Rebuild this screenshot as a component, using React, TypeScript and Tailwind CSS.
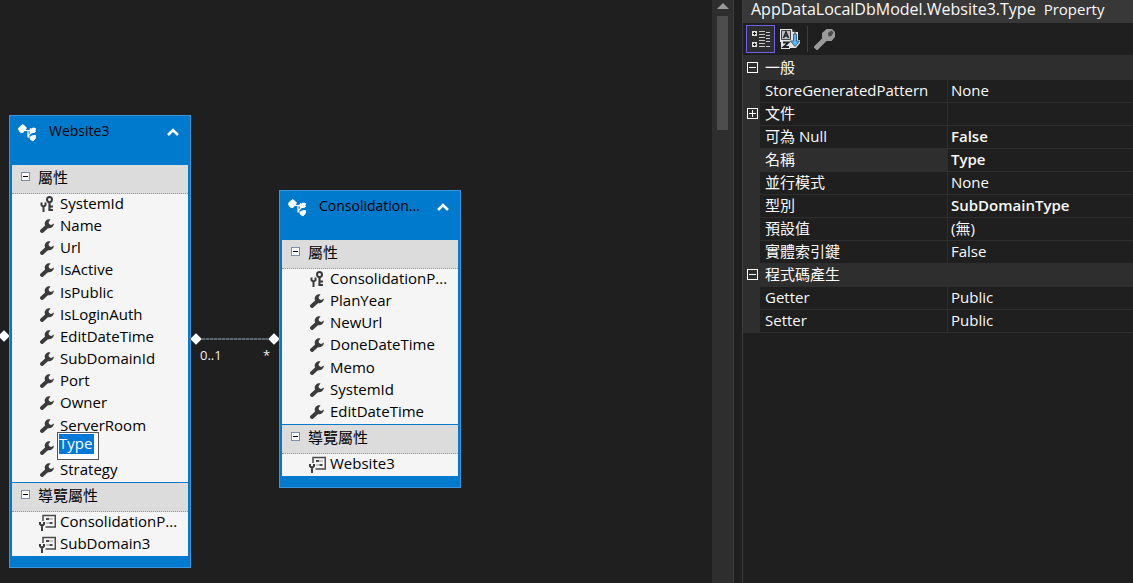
import { ReactNode } from 'react';

type FieldKind = 'key' | 'scalar' | 'navigation';

type Field = {
  name: string;
  kind: FieldKind;
  editing?: boolean;
};

type Property = {
  name: string;
  value: string;
  modified?: boolean;
  selected?: boolean;
  expandable?: boolean;
};

const scalars = (...names: string[]): Field[] =>
  names.map((name) => ({ name, kind: 'scalar' }));

const websiteFields: Field[] = [
  { name: 'SystemId', kind: 'key' },
  ...scalars(
    'Name',
    'Url',
    'IsActive',
    'IsPublic',
    'IsLoginAuth',
    'EditDateTime',
    'SubDomainId',
    'Port',
    'Owner',
    'ServerRoom',
  ),
  { name: 'Type', kind: 'scalar', editing: true },
  ...scalars('Strategy'),
];

const planFields: Field[] = [
  { name: 'ConsolidationP...', kind: 'key' },
  ...scalars(
    'PlanYear',
    'NewUrl',
    'DoneDateTime',
    'Memo',
    'SystemId',
    'EditDateTime',
  ),
];

const generalProperties: Property[] = [
  { name: 'StoreGeneratedPattern', value: 'None' },
  { name: '文件', value: '', expandable: true },
  { name: '可為 Null', value: 'False', modified: true },
  { name: '名稱', value: 'Type', modified: true, selected: true },
  { name: '並行模式', value: 'None' },
  { name: '型別', value: 'SubDomainType', modified: true },
  { name: '預設值', value: '(無)' },
  { name: '實體索引鍵', value: 'False' },
];

const codeProperties: Property[] = [
  { name: 'Getter', value: 'Public' },
  { name: 'Setter', value: 'Public' },
];

const EntityIcon = () => (
  <svg viewBox="0 0 20 20" className="size-5 shrink-0" aria-hidden="true">
    <g fill="#fff" stroke="#fff" strokeLinejoin="round">
      <path d="m1.500 7 1-2L6 2.500 9.500 6 6 10.500 3 10Z" />
      <path d="m13 7 1-.5.5.5 1.500-1 2.500.5-.5 2 .5 1-1.500 1H13Z" />
      <path d="m14.500 14 4-.5-.3 3-2.200 2.500-3-2Z" />
    </g>
    <path d="M8 8.500h5M11 8.500V15h3M11 14l5-5" fill="none" stroke="#fff" strokeWidth="1.200" />
  </svg>
);

const KeyIcon = () => (
  <svg viewBox="0 0 14 16" className="h-4 w-3.5" aria-hidden="true">
    <g fill="none" stroke="#3b3b3b">
      <circle cx="9.500" cy="3.500" r="2.500" strokeWidth="2" />
      <path d="M9.500 6v9M9.500 10.500h3.500M9.500 14h3.500" strokeWidth="2.200" />
      <path d="M1.500 6.500v2.500L3.500 11l2-2V6.500M3.500 10.500V16" strokeWidth="2" />
    </g>
  </svg>
);

const WrenchIcon = () => (
  <svg viewBox="0 0 14 14" className="size-3.5" aria-hidden="true">
    <path d="M2 12 8 6.500" stroke="#3b3b3b" strokeWidth="3.800" strokeLinecap="round" />
    <path
      d="M10.500 .4C7.500-.4 4.500 2 4.700 5l.6 2.400L8 9.200c2.800.6 5.700-1.200 6-4.700L11.200 6 9 5.200 8.600 3Z"
      fill="#3b3b3b"
    />
  </svg>
);

const NavigationIcon = () => (
  <svg viewBox="0 0 18 17" className="h-[17px] w-[18px]" aria-hidden="true">
    <g fill="none" stroke="#4a4a4a">
      <path d="M5 7V1.500h12.300v11.500H7.500" strokeWidth="1.500" />
      <path d="M8 5h3M11.500 9h3" strokeWidth="1.800" />
      <path d="M11 5h4M8 9h3.500" stroke="#999" />
      <path d="M2 8v2l2 2 2-2V8M4 12v5" stroke="#3b3b3b" strokeWidth="2" />
    </g>
  </svg>
);

const FieldIcon = ({ kind }: { kind: FieldKind }) => {
  if (kind === 'key') return <KeyIcon />;
  if (kind === 'navigation') return <NavigationIcon />;
  return <WrenchIcon />;
};

const FieldRow = ({ field }: { field: Field }) => (
  <li className="relative flex h-[22px] items-start">
    <span
      className={`flex h-5 w-[46px] shrink-0 items-center justify-end ${
        field.kind === 'navigation' ? 'pr-0.5' : 'pr-1'
      }`}
    >
      <FieldIcon kind={field.kind} />
    </span>
    {field.editing ? (
      <span className="absolute -top-1.5 left-[45px] z-10 flex h-7 w-[42px] border border-[#555] bg-white p-px">
        <input
          aria-label="Property name"
          defaultValue={field.name}
          className="h-5 w-[35px] bg-[#0078d7] text-[15px] text-white outline-none"
        />
      </span>
    ) : (
      <span className="pl-0.5 leading-[18px] whitespace-nowrap">{field.name}</span>
    )}
  </li>
);

const SectionHeader = ({ title }: { title: string }) => (
  <div className="flex h-[29px] items-center border-b border-dotted border-[#999] bg-[#dcdcdc] pb-1 pl-[9px]">
    <button
      type="button"
      aria-label={`Collapse ${title}`}
      className="mb-0.5 flex size-[9px] items-center justify-center border border-[#7d8fa6] bg-white"
    >
      <span className="h-px w-[5px] bg-black" />
    </button>
    <h3 className="ml-2 text-[15px] font-normal">{title}</h3>
  </div>
);

type EntityProps = {
  title: string;
  className: string;
  fields: Field[];
  navigation: Field[];
};

const Entity = ({ title, className, fields, navigation }: EntityProps) => (
  <section
    className={`absolute flex w-[182px] flex-col border border-[#3b95d8] bg-[#007acc] px-0.5 pb-[11px] text-[15px] text-black ${className}`}
  >
    <header className="flex h-[49px] items-start pt-1.5 pr-[9px] pl-[5px]">
      <EntityIcon />
      <h2 className="ml-3 flex-1 text-sm leading-[18px] whitespace-nowrap">{title}</h2>
      <button type="button" aria-label={`Collapse ${title}`} className="mt-1.5">
        <svg viewBox="0 0 12 8" className="h-2 w-3">
          <path d="m1 7 5-5 5 5" fill="none" stroke="#fff" strokeWidth="2.500" />
        </svg>
      </button>
    </header>
    <SectionHeader title="屬性" />
    <ul className="flex flex-1 flex-col justify-between bg-[#f5f5f5]">
      {fields.map((field) => (
        <FieldRow key={field.name} field={field} />
      ))}
    </ul>
    <div className="border-t border-[#007acc]">
      <SectionHeader title="導覽屬性" />
    </div>
    <ul className="bg-[#f5f5f5]">
      {navigation.map((field) => (
        <FieldRow key={field.name} field={field} />
      ))}
    </ul>
  </section>
);

const Diamond = ({ x, y }: { x: number; y: number }) => (
  <path
    d={`M${x - 6} ${y}l6-6 6 6-6 6Z`}
    fill="#fff"
    stroke="#5a6673"
    strokeWidth="1"
  />
);

const Designer = () => (
  <main className="relative min-w-0 flex-1 overflow-hidden">
    <Entity
      title="Website3"
      className="top-[115px] left-[9px] min-h-[453px]"
      fields={websiteFields}
      navigation={[
        { name: 'ConsolidationP...', kind: 'navigation' },
        { name: 'SubDomain3', kind: 'navigation' },
      ]}
    />
    <Entity
      title="Consolidation..."
      className="top-[190px] left-[279px] min-h-[298px]"
      fields={planFields}
      navigation={[{ name: 'Website3', kind: 'navigation' }]}
    />
    <svg
      viewBox="0 0 290 20"
      className="absolute top-[329px] left-0 h-5 w-[290px]"
      aria-hidden="true"
    >
      <path d="M202 10h66" stroke="#3a4654" strokeWidth="2" />
      <path d="M202 10h66" stroke="#7a838d" strokeDasharray="3 1" />
      <Diamond x={4} y={7} />
      <Diamond x={196} y={10} />
      <Diamond x={274} y={10} />
    </svg>
    <span className="absolute top-[346px] left-[200px] text-[13px] leading-[18px] text-[#f0f0f0]">
      0..1
    </span>
    <span className="absolute top-[346px] left-[263px] text-[13px] leading-[18px] text-[#f0f0f0]">
      *
    </span>
  </main>
);

const Scrollbar = () => (
  <div className="flex w-[22px] shrink-0 flex-col border-r border-[#3d3d3d] bg-[#2e2e2e] px-[5px] pt-[3px]">
    <button type="button" aria-label="Scroll up" className="mb-[7px] w-3">
      <svg viewBox="0 0 12 6" className="h-1.5 w-3">
        <path d="M0 6 6 0l6 6Z" fill="#999" />
      </svg>
    </button>
    <div className="h-[114px] w-[11px] bg-[#4d4d4d]" />
  </div>
);

const ToggleButton = ({ label, expanded }: { label: string; expanded: boolean }) => (
  <button
    type="button"
    aria-label={label}
    aria-expanded={expanded}
    className="ml-1 block size-[11px] border border-white"
  >
    <svg viewBox="0 0 9 9" className="size-[9px]">
      <path
        d={expanded ? 'M1 4.500h7' : 'M1 4.500h7M4.500 1v7'}
        stroke="#fff"
        strokeWidth="1"
      />
    </svg>
  </button>
);

const CategoryRow = ({ title }: { title: string }) => (
  <tr className="h-[23px] bg-[#2e2e2e]">
    <td className="p-0 pb-0.5">
      <ToggleButton label={title} expanded />
    </td>
    <th
      colSpan={2}
      scope="rowgroup"
      className="p-0 pb-[3px] pl-[5px] text-left leading-5 font-normal"
    >
      {title}
    </th>
  </tr>
);

const PropertyRow = ({ property }: { property: Property }) => (
  <tr className="h-[23px]">
    <td className="bg-[#2e2e2e] p-0 pb-0.5">
      {property.expandable && <ToggleButton label={property.name} expanded={false} />}
    </td>
    <th
      scope="row"
      className={`border-r border-b border-[#2e2e2e] p-0 pb-0.5 pl-[5px] text-left font-normal ${
        property.selected ? 'bg-[#2e2e2e]' : ''
      }`}
    >
      {property.name}
    </th>
    <td
      className={`border-b border-[#2e2e2e] p-0 pb-0.5 pl-[3px] ${
        property.modified ? 'font-semibold' : ''
      }`}
    >
      {property.value}
    </td>
  </tr>
);

const CategorizedIcon = () => (
  <svg viewBox="0 0 20 20" className="size-5">
    <path d="M1 2h5v5H1ZM1 13h5v5H1Z" fill="#e0e0e0" />
    <path d="M2 4.500h3M3.500 3v3M2 15.500h3M3.500 14v3" stroke="#1f1f1f" />
    <path
      d="M8 2.500h6M8 5.500h6M8 8.500h6M8 11.500h6M8 14.500h6M8 17.500h6"
      stroke="#c8c8c8"
    />
    <path
      d="M15 3.500h4M15 6.500h4M15 9.500h4M15 12.500h4M15 17.500h4"
      stroke="#c8c8c8"
    />
  </svg>
);

const AlphabeticalIcon = () => (
  <svg viewBox="0 0 20 20" className="size-5">
    <path d="M0 0h12l1 3h5v8h2v3l-4 5h-6v1H1v-7H0Z" fill="#e4e4e4" />
    <path d="M1.500 1.500h9v9h-9Z" fill="#bdbdbd" stroke="#444" />
    <path d="m3.500 9 2.500-6 2.500 6M4.500 7h3" fill="none" stroke="#222" strokeWidth="1.500" />
    <path d="M3 13.500h5.500L3.500 18H9" fill="none" stroke="#222" strokeWidth="1.800" />
    <path d="M12 2h3v3" fill="none" stroke="#444" />
    <path
      d="M13.500 5h3v7h3l-4.500 5.500-4.500-5.500h3Z"
      fill="#55b9ff"
      stroke="#1f4e6e"
      strokeWidth=".8"
    />
  </svg>
);

const PropertyPagesIcon = () => (
  <svg viewBox="0 0 22 22" className="size-[22px]">
    <path d="M3 19 12 10" stroke="#9a9a9a" strokeWidth="5" strokeLinecap="square" />
    <path d="M12.500 1H18l3 3v5L17.500 13H12L8 10V5Z" fill="#9a9a9a" />
    <path d="m14 5 3.500-2.500 2 2-2 3.500-3 .5Z" fill="#4a4a4a" />
  </svg>
);

type ToolButtonProps = {
  label: string;
  active?: boolean;
  children: ReactNode;
};

const ToolButton = ({ label, active, children }: ToolButtonProps) => (
  <button
    type="button"
    aria-label={label}
    className={`flex h-7 w-[29px] items-center justify-center border ${
      active ? 'border-[#7160e8] bg-[#2e2e2e]' : 'border-transparent'
    }`}
  >
    {children}
  </button>
);

const PropertiesPanel = () => (
  <aside className="ml-2 w-[391px] shrink-0 border-l border-[#3d3d3d] text-[15px] text-[#fafafa]">
    <h1 className="flex h-[23px] items-baseline gap-2 bg-[#383838] pl-2 leading-[18px] whitespace-nowrap">
      <span className="text-base leading-[18px] font-medium">
        AppDataLocalDbModel.Website3.Type
      </span>
      <span className="font-normal">Property</span>
    </h1>
    <div className="flex h-8 items-center pl-[3px]">
      <ToolButton label="Categorized" active>
        <CategorizedIcon />
      </ToolButton>
      <ToolButton label="Alphabetical">
        <AlphabeticalIcon />
      </ToolButton>
      <span className="mr-0.5 ml-[3px] h-[26px] w-px bg-[#3d3d3d]" />
      <ToolButton label="Property pages">
        <PropertyPagesIcon />
      </ToolButton>
    </div>
    <table className="w-full table-fixed border-separate border-spacing-0 border-t-2 border-[#2e2e2e] leading-5">
      <colgroup>
        <col className="w-[17px]" />
        <col className="w-[188px]" />
        <col />
      </colgroup>
      <tbody>
        <CategoryRow title="一般" />
        {generalProperties.map((property) => (
          <PropertyRow key={property.name} property={property} />
        ))}
      </tbody>
      <tbody>
        <CategoryRow title="程式碼產生" />
        {codeProperties.map((property) => (
          <PropertyRow key={property.name} property={property} />
        ))}
      </tbody>
    </table>
  </aside>
);

export default function App() {
  return (
    <div className="flex min-h-screen overflow-hidden bg-[#1f1f1f] font-['Open_Sans','Noto_Sans_CJK_TC',sans-serif]">
      <Designer />
      <Scrollbar />
      <PropertiesPanel />
    </div>
  );
}
